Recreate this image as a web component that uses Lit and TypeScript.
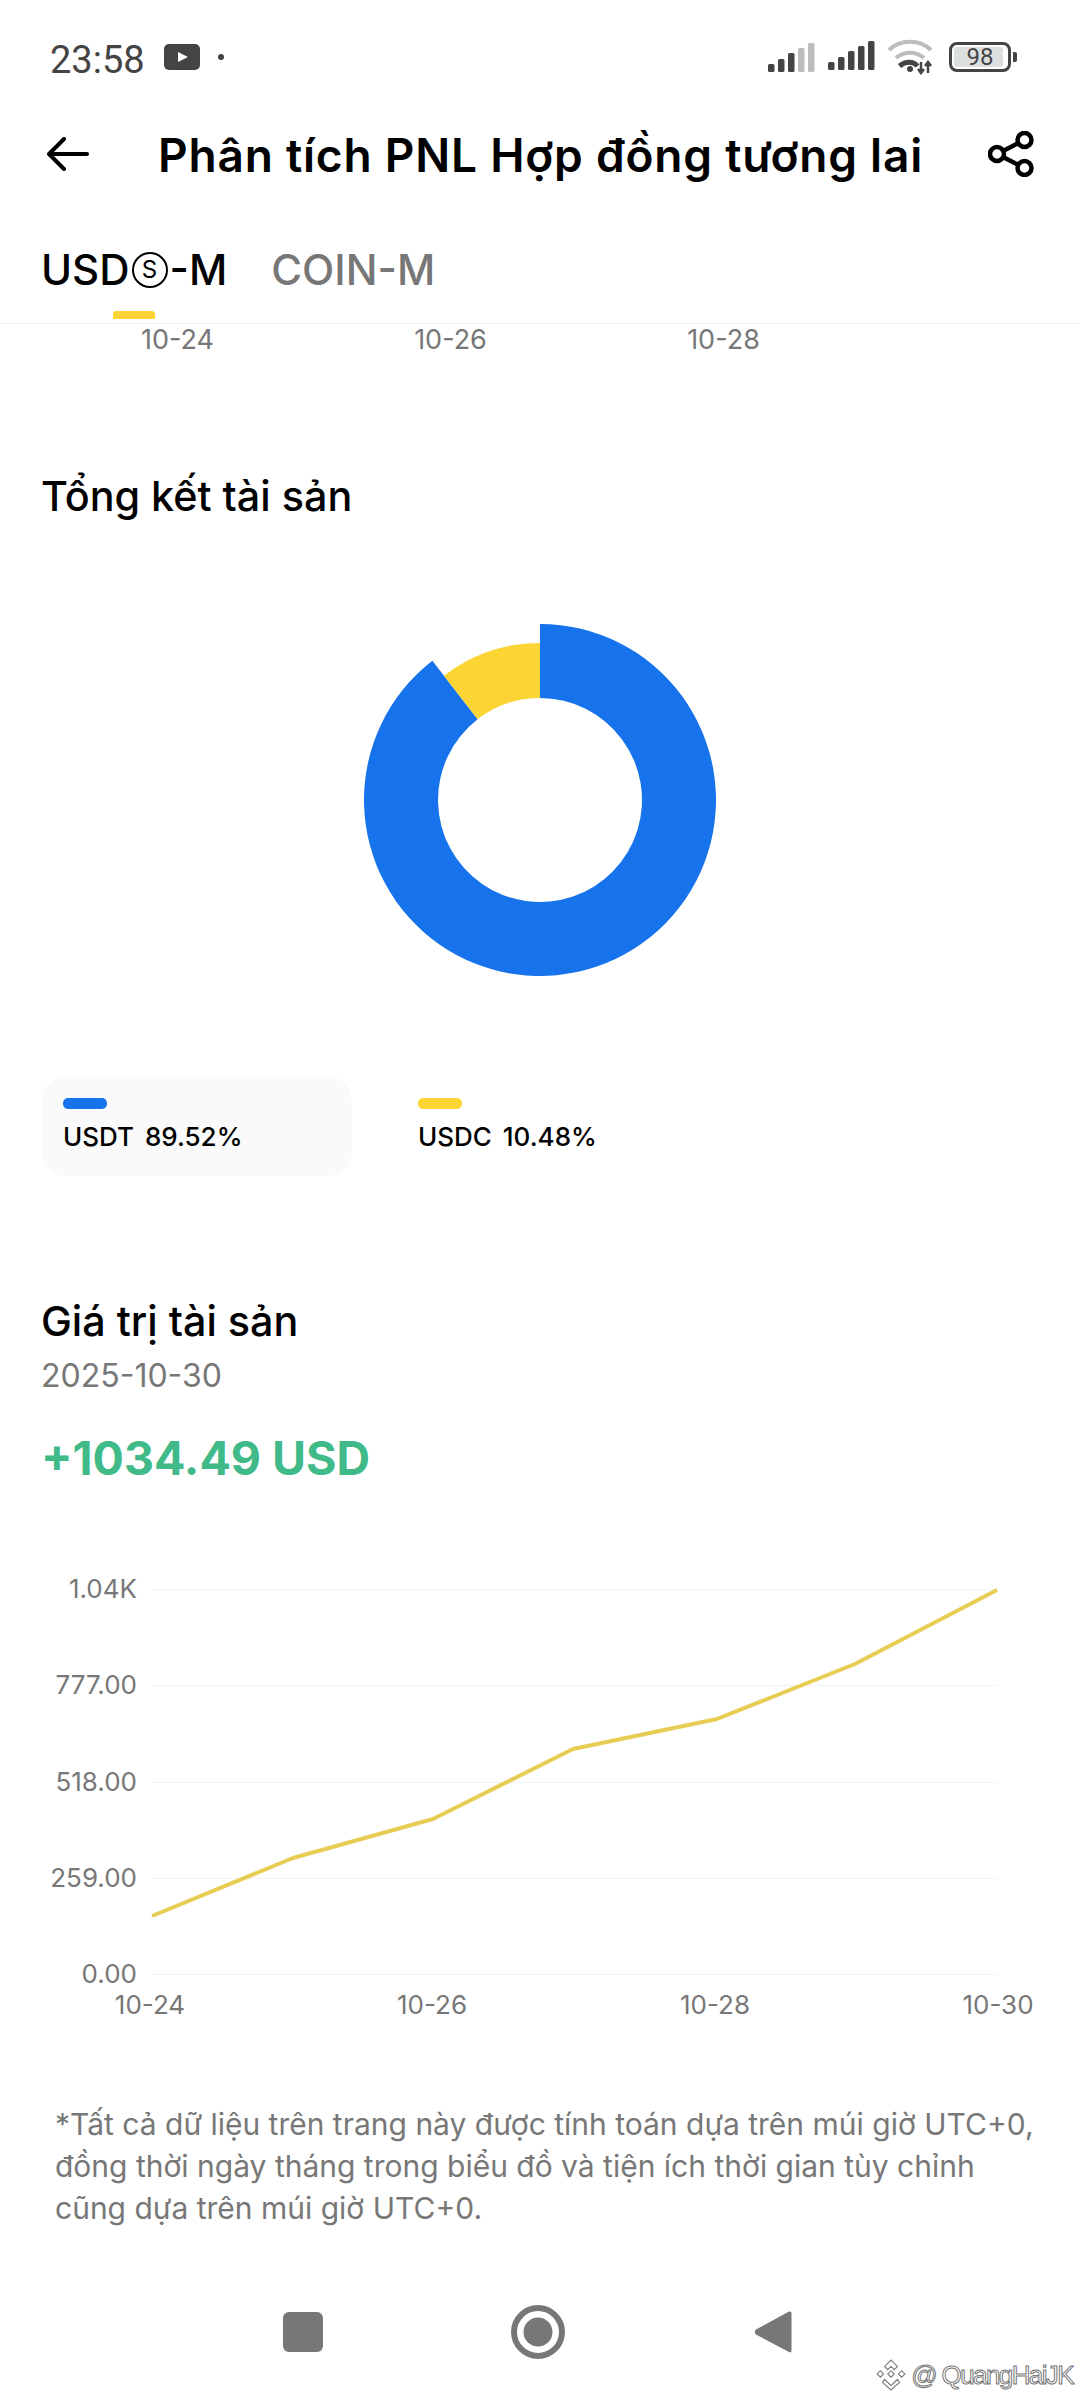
import { LitElement, html, svg, css } from 'lit';
import { customElement } from 'lit/decorators.js';

const LINE: [number, number][] = [
  [152, 1916], [293, 1858], [433, 1819], [573, 1749], [717, 1719], [855, 1664], [997, 1590],
];
const CHART_TOP = 1560;
const GRID = [
  { y: 1589, label: '1.04K' },
  { y: 1685, label: '777.00' },
  { y: 1782, label: '518.00' },
  { y: 1878, label: '259.00' },
  { y: 1974, label: '0.00' },
];
const X_LABELS = [
  { x: 150, label: '10-24' },
  { x: 432, label: '10-26' },
  { x: 715, label: '10-28' },
  { x: 998, label: '10-30' },
];

// ring slice between two angles, measured clockwise from 12 o'clock
function slice(cx: number, cy: number, r0: number, r1: number, from: number, to: number) {
  const p = (r: number, a: number) => {
    const t = (a * Math.PI) / 180;
    return `${(cx + r * Math.sin(t)).toFixed(2)} ${(cy - r * Math.cos(t)).toFixed(2)}`;
  };
  const large = to - from > 180 ? 1 : 0;
  return `M${p(r1, from)}A${r1} ${r1} 0 ${large} 1 ${p(r1, to)}L${p(r0, to)}A${r0} ${r0} 0 ${large} 0 ${p(r0, from)}Z`;
}

@customElement('app-root')
export class AppRoot extends LitElement {
  static styles = css`
    :host {
      display: flex;
      flex-direction: column;
      position: relative;
      width: 1080px;
      height: 2400px;
      overflow: hidden;
      background: #fff;
      font-family: Inter, "Noto Sans", sans-serif;
      color: #000;
    }
    .status {
      display: flex;
      align-items: center;
      height: 114px;
      padding: 0 63px 0 50px;
      box-sizing: border-box;
      color: #444;
    }
    .clock {
      font: 400 38px/40px Roboto, sans-serif;
      margin: 6px 19px 0 0;
    }
    .dot {
      width: 6px;
      height: 6px;
      border-radius: 50%;
      background: #444;
      margin-left: 18px;
    }
    .status-right {
      display: flex;
      align-items: center;
      margin-left: auto;
    }
    .wifi { margin-left: 12px; }
    .sim2 { margin-left: 12px; }
    .battery {
      position: relative;
      display: flex;
      align-items: center;
      justify-content: center;
      width: 62px;
      height: 30px;
      box-sizing: border-box;
      border: 3px solid #444;
      border-radius: 8px;
      margin-left: 16px;
      font: 400 24px/24px Roboto, sans-serif;
    }
    .battery::before {
      content: "";
      position: absolute;
      inset: 2px;
      right: 5px;
      background: #dcdfdf;
      border-radius: 3px;
    }
    .battery span { position: relative; }
    .nub {
      width: 4px;
      height: 10px;
      background: #444;
      border-radius: 0 2px 2px 0;
      margin-left: 2px;
    }
    .header {
      display: flex;
      align-items: center;
      height: 82px;
      box-sizing: border-box;
      padding: 0 46px 3px 47px;
    }
    .title {
      flex: 1;
      margin: 3px 0 0 69px;
      font-size: 46px;
      font-weight: 600;
      letter-spacing: 0.8px;
      line-height: 60px;
      white-space: nowrap;
    }
    .tabs {
      display: flex;
      height: 128px;
      box-sizing: border-box;
      border-bottom: 1px solid #e9f0f0;
      padding: 49px 0 0 41px;
      gap: 44px;
    }
    .tab {
      display: flex;
      flex-direction: column;
      align-items: center;
      font-size: 42px;
      font-weight: 500;
      line-height: 50px;
      color: #777;
    }
    .tab.on { color: #000; }
    .tab-label {
      display: flex;
      align-items: center;
    }
    .coin {
      display: inline-flex;
      align-items: center;
      justify-content: center;
      width: 36px;
      height: 36px;
      margin: 0 2px;
      box-sizing: border-box;
      border: 2.5px solid currentColor;
      border-radius: 50%;
      font-size: 24px;
      line-height: 1;
      font-weight: 400;
    }
    .tab-bar {
      width: 42px;
      height: 8px;
      margin-top: 16px;
      background: #fcd535;
      border-radius: 3px 3px 0 0;
    }
    .axis {
      display: grid;
      grid-template-columns: repeat(3, 273px);
      height: 31px;
      padding-left: 41px;
      font-size: 27px;
      line-height: 32px;
      color: #777;
      text-align: center;
    }
    .heading {
      font-size: 41.3px;
      font-weight: 500;
      line-height: 50px;
      padding-left: 41px;
    }
    .summary { margin-top: 116px; }
    .donut {
      display: block;
      margin: 103px auto -1px;
    }
    .legend {
      display: flex;
      margin: 102px 0 0 42px;
      gap: 45px;
    }
    .item {
      width: 310px;
      height: 99px;
      box-sizing: border-box;
      padding: 21px;
      border-radius: 24px;
      font-size: 26px;
      font-weight: 500;
      line-height: 36px;
      word-spacing: 4px;
    }
    .item.on { background: #fafafa; }
    .mark {
      width: 44px;
      height: 11px;
      border-radius: 5px;
      margin-bottom: 10px;
    }
    .value { margin-top: 120px; }
    .date {
      margin: 10px 0 0 41px;
      font-size: 32px;
      line-height: 40px;
      color: #777;
    }
    .amount {
      margin: 32px 0 0 41px;
      font-size: 46.500px;
      font-weight: 700;
      line-height: 60px;
      color: #41ba8a;
    }
    .chart {
      display: block;
      margin-top: 72px;
    }
    .chart text {
      font-size: 26px;
      fill: #777;
    }
    .note {
      margin: 73px 0 0 55px;
      width: 990px;
      font-size: 30px;
      line-height: 42px;
      color: #777;
    }
    .nav {
      display: grid;
      grid-template-columns: repeat(3, 235px);
      justify-content: center;
      justify-items: center;
      align-items: center;
      margin-top: auto;
      height: 136px;
      padding-right: 4px;
    }
    .mark-wm {
      position: absolute;
      right: 7px;
      bottom: 9px;
      display: flex;
      align-items: center;
      gap: 4px;
      font: 400 26px/32px "Liberation Sans", sans-serif;
      letter-spacing: -1.600px;
      color: #fff;
      -webkit-text-stroke: 1px #777;
    }
  `;

  private signal(level: number) {
    const heights = [8, 13, 19, 24, 29];
    return html`<svg width="48" height="30" viewBox="0 0 48 30">
      ${heights.map((h, i) => svg`<rect x=${1 + i * 10} y=${30 - h} width="6.5" height=${h} rx="1.5"
        fill=${i < level ? '#444' : '#bdbdbd'}></rect>`)}
    </svg>`;
  }

  render() {
    const line = LINE.map(([x, y]) => `${x},${y - CHART_TOP}`).join(' ');
    return html`
      <div class="status">
        <span class="clock">23:58</span>
        <svg width="36" height="26" viewBox="0 0 36 26">
          <rect width="36" height="26" rx="5" fill="#444"></rect>
          <path d="M14 8l10 5-10 5z" fill="#fff"></path>
        </svg>
        <span class="dot"></span>
        <div class="status-right">
          ${this.signal(3)}
          <span class="sim2">${this.signal(5)}</span>
          <svg class="wifi" width="46" height="36" viewBox="0 0 46 36" fill="none">
            <path d="M2 11C13 0 33 0 44 11" stroke="#bdbdbd" stroke-width="4"></path>
            <path d="M9 19c8-7 20-7 28 0" stroke="#bdbdbd" stroke-width="4"></path>
            <path d="M12.500 27c6-5 14-5 18 0" stroke="#444" stroke-width="5"></path>
            <circle cx="23" cy="30" r="3" fill="#444"></circle>
            <path d="M34 23v11M41 34V23M31 30l3 4 3-4M38 27l3-4 3 4" stroke="#444" stroke-width="2.500"></path>
          </svg>
          <div class="battery"><span>98</span></div>
          <div class="nub"></div>
        </div>
      </div>

      <div class="header">
        <svg width="42" height="34" viewBox="0 0 42 34" fill="none" stroke="#000" stroke-width="4" stroke-linecap="round" stroke-linejoin="round">
          <path d="M40 17H2M17 2L2 17l15 15"></path>
        </svg>
        <div class="title">Phân tích PNL Hợp đồng tương lai</div>
        <svg width="46" height="46" viewBox="0 0 46 46" fill="none" stroke="#000" stroke-width="4.500">
          <circle cx="36.500" cy="9" r="7"></circle>
          <circle cx="36.500" cy="37" r="7"></circle>
          <circle cx="9" cy="23" r="7"></circle>
          <path d="M15.500 19.700L30 12.300M15.500 26.300L30 33.700"></path>
        </svg>
      </div>

      <div class="tabs">
        <div class="tab on">
          <div class="tab-label">USD<span class="coin">S</span>-M</div>
          <div class="tab-bar"></div>
        </div>
        <div class="tab"><div class="tab-label">COIN-M</div></div>
      </div>

      <div class="axis"><span>10-24</span><span>10-26</span><span>10-28</span></div>

      <div class="heading summary">Tổng kết tài sản</div>
      <svg class="donut" width="352" height="352" viewBox="-1 -1 352 352">
        <path d=${slice(175, 175, 102, 176, 0, 322.3)} fill="#1673eb"></path>
        <path d=${slice(175, 175, 102, 157, 322.3, 360)} fill="#fcd535"></path>
      </svg>

      <div class="legend">
        <div class="item on">
          <div class="mark" style="background:#1673eb"></div>
          USDT 89.52%
        </div>
        <div class="item">
          <div class="mark" style="background:#fcd535"></div>
          USDC 10.48%
        </div>
      </div>

      <div class="heading value">Giá trị tài sản</div>
      <div class="date">2025-10-30</div>
      <div class="amount">+1034.49 USD</div>

      <svg class="chart" width="1080" height="470" viewBox="0 0 1080 470">
        ${GRID.map((g) => svg`
          <line x1="152" x2="997" y1=${g.y - CHART_TOP + 0.5} y2=${g.y - CHART_TOP + 0.5} stroke="#f0f3f3"></line>
          <text x="137" y=${g.y - CHART_TOP + 9} text-anchor="end">${g.label}</text>`)}
        <polyline points=${line} fill="none" stroke="#e8cd55" stroke-width="4" stroke-linejoin="round"></polyline>
        ${X_LABELS.map((l) => svg`<text x=${l.x} y="454" text-anchor="middle">${l.label}</text>`)}
      </svg>

      <div class="note">*Tất cả dữ liệu trên trang này được tính toán dựa trên múi giờ UTC+0, đồng thời ngày tháng trong biểu đồ và tiện ích thời gian tùy chỉnh cũng dựa trên múi giờ UTC+0.</div>

      <div class="nav">
        <svg width="40" height="40" viewBox="0 0 40 40"><rect width="40" height="40" rx="6" fill="#777"></rect></svg>
        <svg width="54" height="54" viewBox="0 0 54 54">
          <circle cx="27" cy="27" r="24" fill="none" stroke="#777" stroke-width="6"></circle>
          <circle cx="27" cy="27" r="14.500" fill="#777"></circle>
        </svg>
        <svg width="38" height="46" viewBox="0 0 38 46"><path d="M36 2.500a1.500 1.500 0 0 1 1.500 1.500v38a1.500 1.500 0 0 1-2.500 1L2 25.500a3.500 3.500 0 0 1 0-5L35 2.500z" fill="#777"></path></svg>
      </div>

      <div class="mark-wm">
        <svg width="32" height="32" viewBox="0 0 30 30" fill="#fff" stroke="#777" stroke-width="1">
          <path d="M15 1l6 6-3 3-3-3-3 3-3-3zM5 11l3 3-3 3-3-3zM25 11l3 3-3 3-3-3zM15 11l3 3-3 3-3-3zM9 19l6 6 6-6 2 3-8 7-8-7z"></path>
        </svg>
        <span>@ QuangHaiJK</span>
      </div>
    `;
  }
}
